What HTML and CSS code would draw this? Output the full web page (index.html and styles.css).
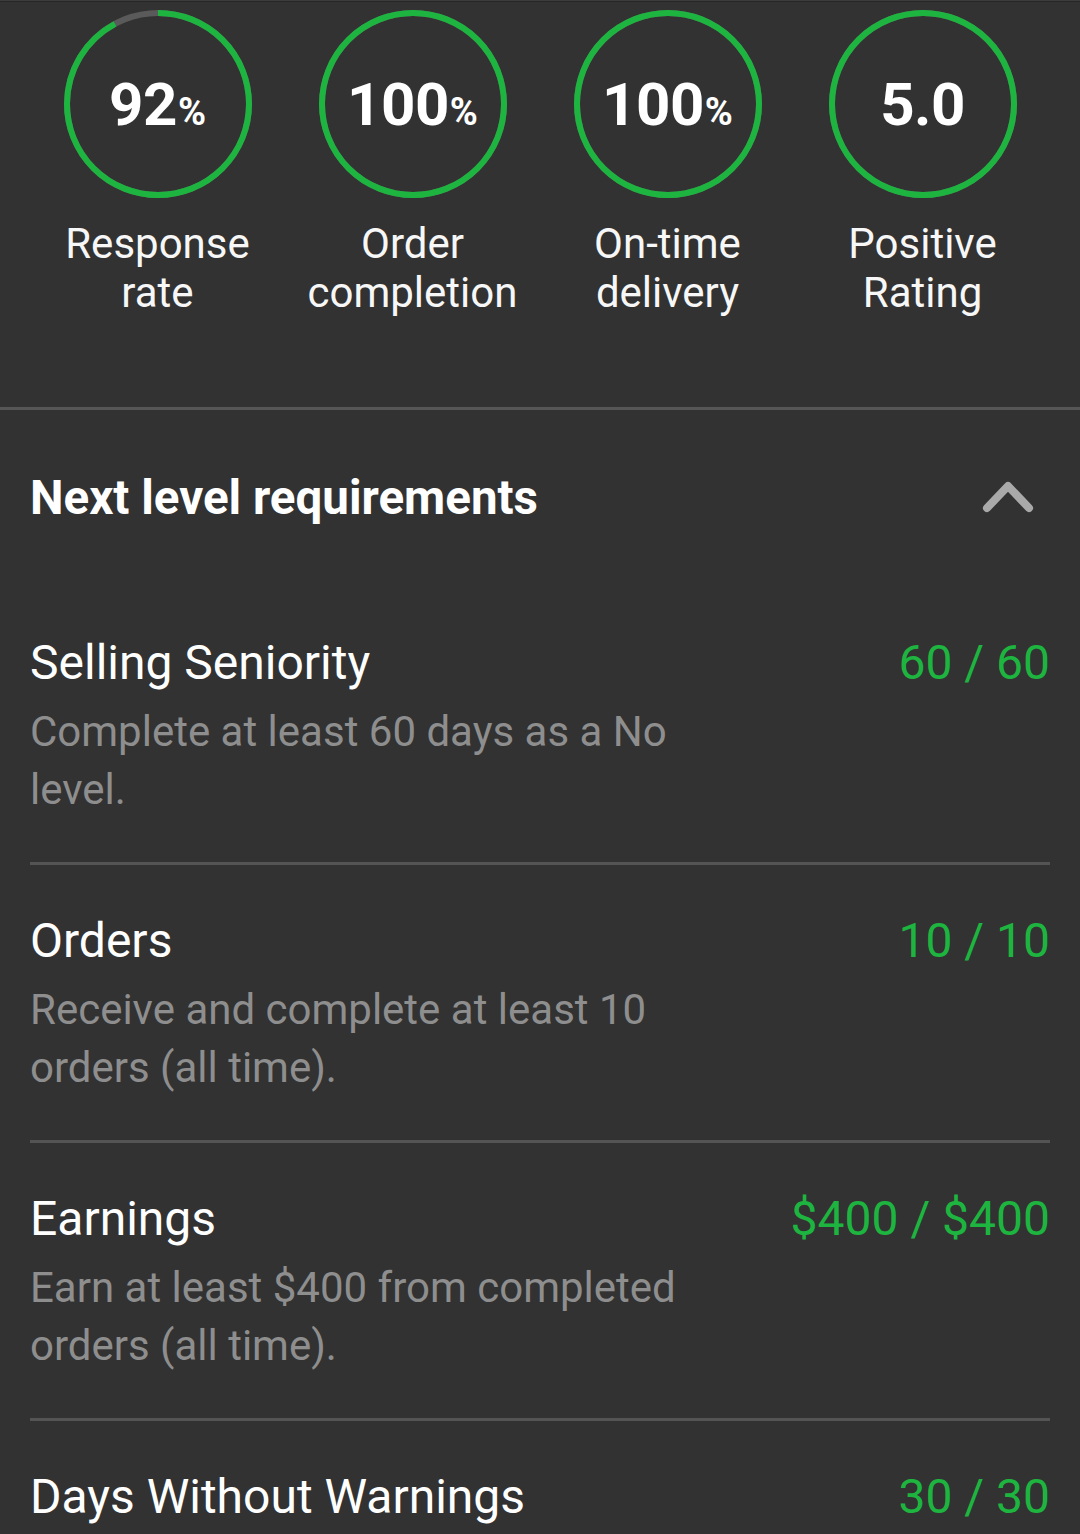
FILE: index.html
```html
<!DOCTYPE html>
<html lang="en">
<head>
<meta charset="utf-8">
<title>Level overview</title>
<link rel="stylesheet" href="styles.css">
</head>
<body>
<div class="top-edge"></div>
<section class="stats">
  <div class="stat">
    <div class="ring">
      <svg class="ring-svg" width="188" height="188" viewBox="0 0 188 188">
        <circle class="track" cx="94" cy="94" r="91"/>
        <circle class="progress" cx="94" cy="94" r="91" stroke-dasharray="526.03 571.77" transform="rotate(-90 94 94)"/>
      </svg>
      <div class="value"><span class="num">92</span><span class="pct">%</span></div>
    </div>
    <div class="label">Response<br>rate</div>
  </div>
  <div class="stat">
    <div class="ring">
      <svg class="ring-svg" width="188" height="188" viewBox="0 0 188 188">
        <circle class="track" cx="94" cy="94" r="91"/>
        <circle class="progress" cx="94" cy="94" r="91" stroke-dasharray="571.77 0" transform="rotate(-90 94 94)"/>
      </svg>
      <div class="value"><span class="num">100</span><span class="pct">%</span></div>
    </div>
    <div class="label">Order<br>completion</div>
  </div>
  <div class="stat">
    <div class="ring">
      <svg class="ring-svg" width="188" height="188" viewBox="0 0 188 188">
        <circle class="track" cx="94" cy="94" r="91"/>
        <circle class="progress" cx="94" cy="94" r="91" stroke-dasharray="571.77 0" transform="rotate(-90 94 94)"/>
      </svg>
      <div class="value"><span class="num">100</span><span class="pct">%</span></div>
    </div>
    <div class="label">On-time<br>delivery</div>
  </div>
  <div class="stat">
    <div class="ring">
      <svg class="ring-svg" width="188" height="188" viewBox="0 0 188 188">
        <circle class="track" cx="94" cy="94" r="91"/>
        <circle class="progress" cx="94" cy="94" r="91" stroke-dasharray="571.77 0" transform="rotate(-90 94 94)"/>
      </svg>
      <div class="value"><span class="num">5.0</span></div>
    </div>
    <div class="label">Positive<br>Rating</div>
  </div>
</section>
<div class="section-divider"></div>
<section class="requirements">
  <div class="req-header">
    <h2 class="req-title">Next level requirements</h2>
    <svg class="chevron" width="56" height="36" viewBox="0 0 56 36">
      <path d="M7 28 L28 6 L49 28" fill="none" stroke="#a9a9a9" stroke-width="8" stroke-linecap="round" stroke-linejoin="round"/>
    </svg>
  </div>
  <ul class="req-list">
    <li class="req-item">
      <div class="req-text">
        <div class="req-name">Selling Seniority</div>
        <div class="req-desc">Complete at least 60 days as a No level.</div>
      </div>
      <div class="req-value">60 / 60</div>
    </li>
    <li class="req-item">
      <div class="req-text">
        <div class="req-name">Orders</div>
        <div class="req-desc">Receive and complete at least 10 orders (all time).</div>
      </div>
      <div class="req-value">10 / 10</div>
    </li>
    <li class="req-item">
      <div class="req-text">
        <div class="req-name">Earnings</div>
        <div class="req-desc">Earn at least $400 from completed orders (all time).</div>
      </div>
      <div class="req-value">$400 / $400</div>
    </li>
    <li class="req-item">
      <div class="req-text">
        <div class="req-name">Days Without Warnings</div>
      </div>
      <div class="req-value">30 / 30</div>
    </li>
  </ul>
</section>
</body>
</html>
```
FILE: styles.css
```css
html, body {
  margin: 0;
  padding: 0;
}
body {
  background: #323232;
  color: #ffffff;
  font-family: Roboto, "Noto Sans", "Liberation Sans", sans-serif;
  overflow: hidden;
}
.top-edge {
  height: 1px;
  border-top: 1px solid #3c3c3c;
  background: #272727;
}
.stats {
  display: grid;
  grid-template-columns: repeat(4, 255px);
  padding: 8px 30px 0;
  height: 405px;
  box-sizing: border-box;
}
.stat {
  display: flex;
  flex-direction: column;
  align-items: center;
}
.ring {
  display: grid;
  place-items: center;
  width: 188px;
  height: 188px;
}
.ring-svg,
.value {
  grid-area: 1 / 1;
}
.track {
  fill: none;
  stroke: #5a5a5a;
  stroke-width: 6;
}
.progress {
  fill: none;
  stroke: #1db53f;
  stroke-width: 6;
}
.value {
  font-weight: 700;
  line-height: 1;
  display: flex;
  align-items: baseline;
  margin-top: 2px;
}
.num {
  font-size: 60px;
  letter-spacing: -0.5px;
}
.pct {
  font-size: 38px;
  margin-left: 1px;
}
.label {
  margin-top: 21px;
  font-size: 42px;
  line-height: 49px;
  text-align: center;
  color: #f7f7f7;
}
.section-divider {
  height: 3px;
  background: #565656;
}
.requirements {
  padding: 0 30px;
}
.req-header {
  display: flex;
  justify-content: space-between;
  align-items: center;
  padding-top: 62px;
  height: 52px;
}
.req-title {
  margin: 0;
  font-size: 47.5px;
  font-weight: 700;
  line-height: 52px;
  color: #ffffff;
}
.chevron {
  margin-right: 14px;
}
.req-list {
  list-style: none;
  margin: 63px 0 0;
  padding: 0;
}
.req-item {
  display: flex;
  justify-content: space-between;
  align-items: flex-start;
  padding: 48px 0 43px;
  border-bottom: 3px solid #545454;
}
.req-text {
  width: 700px;
}
.req-name {
  font-size: 48px;
  line-height: 56px;
  color: #ffffff;
}
.req-desc {
  margin-top: 12px;
  font-size: 42px;
  line-height: 58px;
  color: #8e8e8e;
}
.req-value {
  font-size: 48px;
  line-height: 56px;
  color: #1db53f;
  white-space: nowrap;
}
```
